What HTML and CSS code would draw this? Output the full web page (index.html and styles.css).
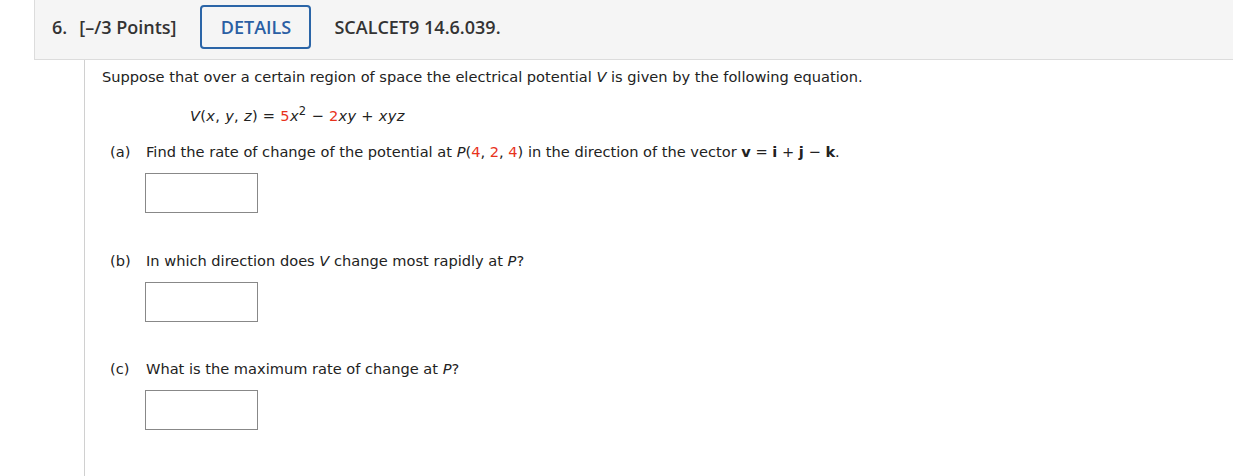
FILE: index.html
```html
<!DOCTYPE html>
<html>
<head>
<meta charset="utf-8">
<link rel="stylesheet" href="styles.css">
</head>
<body>
<div class="header">
  <span class="qnum">6.</span>
  <span class="points">[–/3 Points]</span>
  <button class="details">DETAILS</button>
  <span class="code">SCALCET9 14.6.039.</span>
</div>
<div class="content">
  <p class="intro">Suppose that over a certain region of space the electrical potential <i>V</i> is given by the following equation.</p>
  <p class="eq"><i>V</i>(<i>x</i>, <i>y</i>, <i>z</i>) = <span class="red">5</span><i>x</i><sup>2</sup> − <span class="red">2</span><i>xy</i> + <i>xyz</i></p>
  <div class="part pa">
    <div class="row"><span class="lbl">(a)</span><span>Find the rate of change of the potential at <i>P</i>(<span class="red">4</span>, <span class="red">2</span>, <span class="red">4</span>) in the direction of the vector <b>v</b> = <b>i</b> + <b>j</b> − <b>k</b>.</span></div>
    <div class="box"></div>
  </div>
  <div class="part pb">
    <div class="row"><span class="lbl">(b)</span><span>In which direction does <i>V</i> change most rapidly at <i>P</i>?</span></div>
    <div class="box"></div>
  </div>
  <div class="part pc">
    <div class="row"><span class="lbl">(c)</span><span>What is the maximum rate of change at <i>P</i>?</span></div>
    <div class="box"></div>
  </div>
</div>
</body>
</html>
```
FILE: styles.css
```css
html, body {
  margin: 0;
  padding: 0;
  background: #fff;
}
body {
  width: 1233px;
  height: 476px;
  overflow: hidden;
}
.header {
  margin-left: 34px;
  height: 60px;
  background: #f5f5f5;
  border-left: 1px solid #dcdcdc;
  border-bottom: 1px solid #dcdcdc;
  display: flex;
  align-items: flex-start;
  font-family: "Open Sans", sans-serif;
  font-weight: 600;
  font-size: 18px;
  line-height: 24px;
  color: #333;
  box-sizing: border-box;
}
.qnum, .points, .code {
  margin-top: 15px;
}
.qnum {
  margin-left: 17px;
}
.points {
  margin-left: 12px;
}
.details {
  margin-left: 24px;
  margin-top: 5px;
  width: 111px;
  height: 44px;
  border: 2px solid #2b65a7;
  border-radius: 4px;
  background: #f5f5f5;
  color: #2b5fa4;
  font-family: "Open Sans", sans-serif;
  font-weight: 600;
  font-size: 18px;
  padding: 0;
}
.code {
  margin-left: 23px;
}
.content {
  margin-left: 84px;
  border-left: 1px solid #d0d0d0;
  padding-left: 17px;
  height: 416px;
  font-family: Verdana, "DejaVu Sans", sans-serif;
  font-size: 14.6px;
  color: #222;
}
.intro {
  margin: 0;
  padding-top: 8px;
  line-height: 18px;
}
.eq {
  margin: 0;
  padding-top: 21px;
  padding-left: 88px;
  line-height: 18px;
  letter-spacing: 0.3px;
}
.eq sup {
  font-size: 11.5px;
  vertical-align: 6px;
  line-height: 0;
}
.red {
  color: #e8321c;
}
.part {
  display: flex;
  flex-direction: column;
}
.row {
  display: flex;
  line-height: 18px;
  padding-left: 8px;
}
.lbl {
  width: 36px;
  flex: none;
}
.box {
  margin-left: 43px;
  margin-top: 12px;
  width: 113px;
  height: 40px;
  border: 1px solid #888;
  box-sizing: border-box;
  background: #fff;
}
.pa .row {
  margin-top: 18px;
}
.pb .row {
  margin-top: 39px;
}
.pc .row {
  margin-top: 38px;
}
```
